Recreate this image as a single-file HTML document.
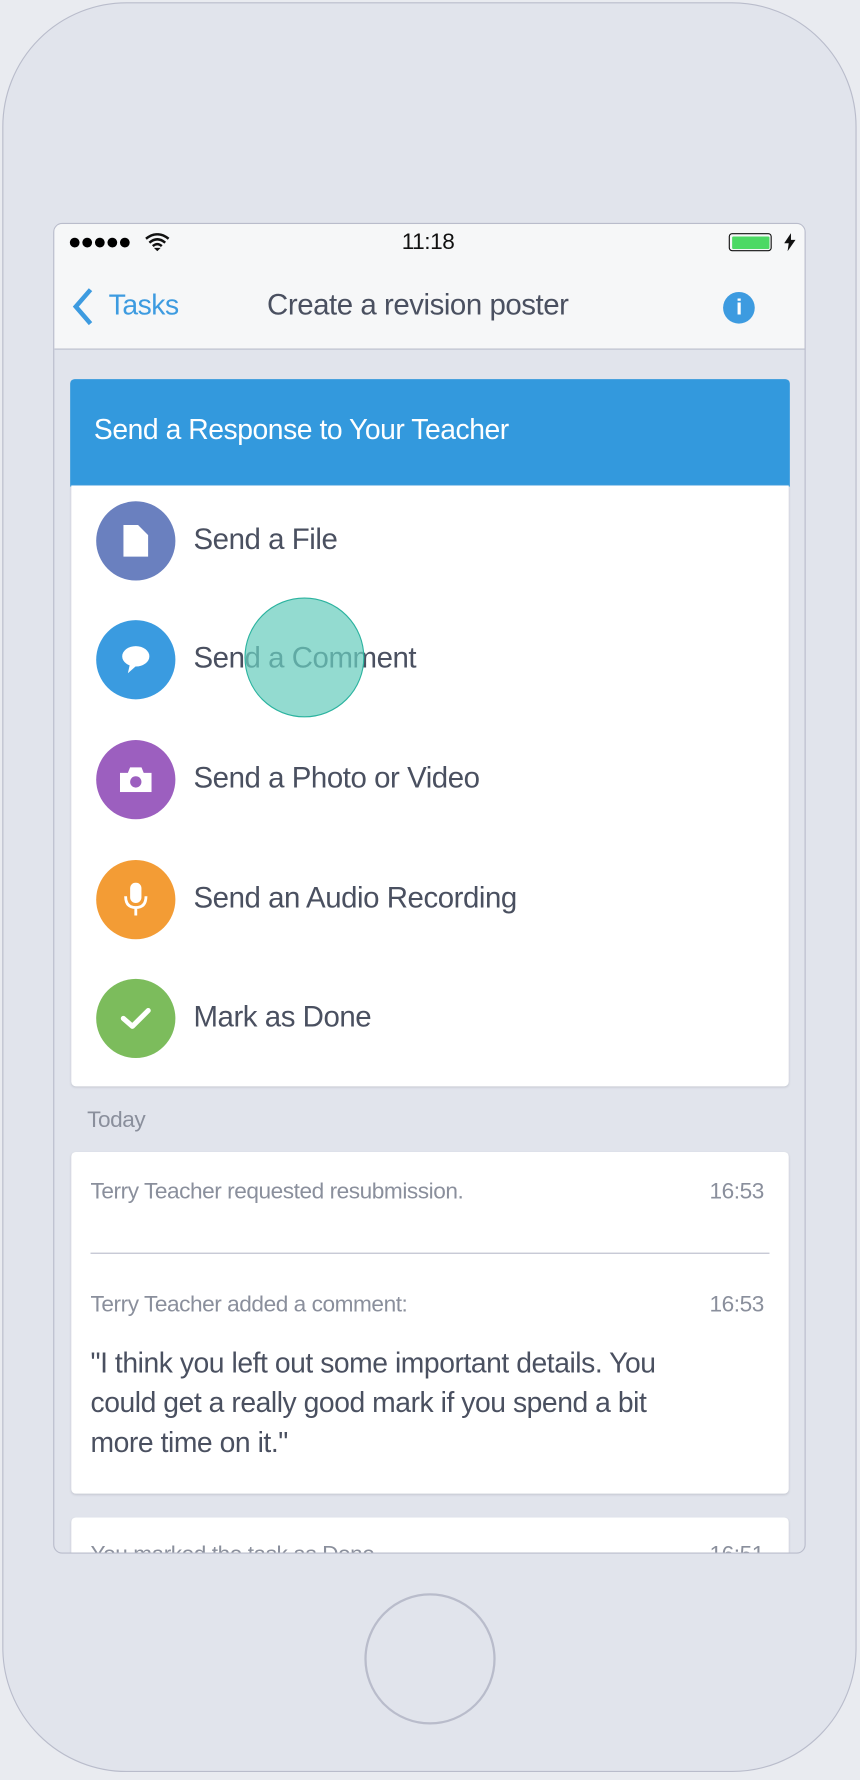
<!DOCTYPE html>
<html><head><style>
html,body{margin:0;padding:0;width:860px;height:1780px;overflow:hidden;background:#e9ebf0}
#w{position:absolute;left:0;top:0;width:760px;height:1573px;transform:scale(1.13158);transform-origin:0 0;font-family:"Liberation Sans",sans-serif;letter-spacing:-0.4px}
.a{position:absolute}
.ph{left:2px;top:2px;width:753px;height:1562px;border:1.5px solid #b9bccb;border-radius:110px;background:#e1e4ec}
.sc{left:47px;top:197px;width:663px;height:1174px;border:1.5px solid #b9bccb;border-radius:8px;background:#e1e4ec;overflow:hidden}
.it{position:absolute;left:22px;width:560px;height:70px}
.ci{position:absolute;left:0;top:0;width:70px;height:70px;border-radius:50%}
.it span{position:absolute;left:86px;top:18px;font-size:26px;color:#4a5060}
.g{color:#8a8f9c;font-size:20px}
</style></head><body><div id="w">
<div class="a ph"></div>
<div class="a" style="left:322px;top:1408px;width:112px;height:112px;border:2px solid #b9bccb;border-radius:50%"></div>
<div class="a sc">
 <div class="a" style="left:0;top:0;width:663px;height:110px;background:#f6f7f8;border-bottom:1.5px solid #b9bccb"></div>
 <div class="a" style="left:12px;top:5px;font-size:20px;letter-spacing:-1px">●●●●●</div>
 <svg class="a" style="left:80px;top:8px" width="22" height="16" viewBox="0 0 22 16"><path d="M1 5Q11-3 21 5M4 8.5Q11 2.5 18 8.5M7 11.5Q11 8 15 11.5" stroke="#111" stroke-width="2.2" fill="none"/><path d="M8 13L11 16 14 13Z" fill="#111"/></svg>
 <div class="a" style="left:307px;top:5px;font-size:20px;color:#111">11:18</div>
 <div class="a" style="left:596px;top:8px;width:36px;height:14px;border:1.5px solid #111;border-radius:3px"><div style="margin:1.5px;height:11px;background:#4cd964;border-radius:1px"></div></div>
 <svg class="a" style="left:645px;top:8px" width="10" height="16"><path d="M6 0L0 9H4L3 16 10 6H6Z" fill="#111"/></svg>
 <svg class="a" style="left:14px;top:55px" width="22" height="36"><path d="M18 3L5 18 18 33" stroke="#3d9be0" stroke-width="4" fill="none"/></svg>
 <div class="a" style="left:48px;top:58px;font-size:25px;color:#3d9be0">Tasks</div>
 <div class="a" style="left:188px;top:56px;font-size:26px;color:#4a5060">Create a revision poster</div>
 <div class="a" style="left:591px;top:60px;width:28px;height:28px;border-radius:50%;background:#3d9be0;color:#fff;font-weight:bold;text-align:center;font-size:20px;line-height:28px">i</div>
 <div class="a" style="left:14px;top:137px;width:636px;height:95px;background:#3399dd;border-radius:4px 4px 0 0"></div>
 <div class="a" style="left:35px;top:168px;font-size:25px;color:#fff">Send a Response to Your Teacher</div>
 <div class="a" style="left:15px;top:231px;width:634px;height:531px;background:#fff;border-radius:0 0 4px 4px;box-shadow:0 1px 2px #c5c8d2">
  <div class="it" style="top:14px"><div class="ci" style="background:#6a80bf"></div><svg class="a" style="left:24px;top:21px" width="22" height="28"><path d="M0 0H13L22 9V28H0Z" fill="#fff"/></svg><span>Send a File</span></div>
  <div class="it" style="top:119px"><div class="ci" style="background:#3a9be0"></div><svg class="a" style="left:22px;top:22px" width="26" height="26"><ellipse cx="13" cy="10" rx="12" ry="9" fill="#fff"/><path d="M8 16L6 25 15 17Z" fill="#fff"/></svg><span>Send a Comment</span></div>
  <div class="it" style="top:225px"><div class="ci" style="background:#9c5fbf"></div><svg class="a" style="left:21px;top:24px" width="28" height="22"><path d="M0 5H7L9 0H19L21 5H28V22H0Z" fill="#fff"/><circle cx="14" cy="13" r="5" fill="#9c5fbf"/></svg><span>Send a Photo or Video</span></div>
  <div class="it" style="top:331px"><div class="ci" style="background:#f39c35"></div><svg class="a" style="left:24px;top:20px" width="22" height="30"><rect x="6" y="0" width="10" height="18" rx="5" fill="#fff"/><path d="M2 12Q2 22 11 22Q20 22 20 12M11 22V29" stroke="#fff" stroke-width="2.5" fill="none"/></svg><span>Send an Audio Recording</span></div>
  <div class="it" style="top:436px"><div class="ci" style="background:#7cbc5c"></div><svg class="a" style="left:21px;top:24px" width="28" height="22"><path d="M3 11L11 18 25 4" stroke="#fff" stroke-width="4.5" fill="none" stroke-linecap="round" stroke-linejoin="round"/></svg><span>Mark as Done</span></div>
 </div>
 <div class="a" style="left:168px;top:330px;width:104px;height:104px;border-radius:50%;background:rgba(105,205,190,.72);border:1px solid #2bb39f"></div>
 <div class="a g" style="left:29px;top:781px">Today</div>
 <div class="a" style="left:15px;top:820px;width:634px;height:302px;background:#fff;border-radius:4px;box-shadow:0 1px 2px #c5c8d2">
  <div class="a g" style="left:17px;top:24px">Terry Teacher requested resubmission.</div>
  <div class="a g" style="left:564px;top:24px">16:53</div>
  <div class="a" style="left:17px;top:89px;width:600px;height:1px;background:#b9bccb"></div>
  <div class="a g" style="left:17px;top:124px">Terry Teacher added a comment:</div>
  <div class="a g" style="left:564px;top:124px">16:53</div>
  <div class="a" style="left:17px;top:170px;width:590px;font-size:25px;line-height:35px;color:#4a5060">"I think you left out some important details. You<br>could get a really good mark if you spend a bit<br>more time on it."</div>
 </div>
 <div class="a" style="left:15px;top:1143px;width:634px;height:80px;background:#fff;border-radius:4px;box-shadow:0 1px 2px #c5c8d2">
  <div class="a g" style="left:17px;top:22px">You marked the task as Done.</div>
  <div class="a g" style="left:564px;top:22px">16:51</div>
 </div>
</div>
</div></body></html>
